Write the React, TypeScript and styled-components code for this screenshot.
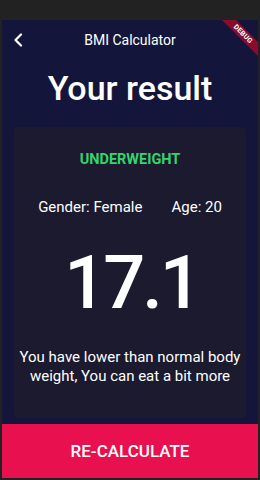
import styled, { createGlobalStyle } from 'styled-components'

const GlobalStyle = createGlobalStyle`
  html, body {
    margin: 0;
    padding: 0;
    background: #222222;
  }
  body {
    font-family: Roboto, "Noto Sans", sans-serif;
  }
`

const Result = {
  status: 'UNDERWEIGHT',
  gender: 'Female',
  age: 20,
  bmi: '17.1',
  advice: 'You have lower than normal body weight, You can eat a bit more',
}

const App = () => {
  return (
    <>
      <GlobalStyle />
      <Frame>
        <StatusBar />
        <Screen>
          <AppBar>
            <BackButton aria-label="back">
              <svg width="10" height="14" viewBox="0 0 10 14">
                <path d="M8 1.5 L2.5 7 L8 12.5" fill="none" stroke="#fff" strokeWidth="2.2" strokeLinecap="round" strokeLinejoin="round" />
              </svg>
            </BackButton>
            <AppTitle>BMI Calculator</AppTitle>
          </AppBar>

          <Heading>Your result</Heading>

          <Card>
            <StatusText>{Result.status}</StatusText>
            <InfoRow>
              <span>Gender: {Result.gender}</span>
              <span>Age: {Result.age}</span>
            </InfoRow>
            <BmiValue>{Result.bmi}</BmiValue>
            <Advice>{Result.advice}</Advice>
          </Card>

          <BottomButton>RE-CALCULATE</BottomButton>

          <DebugRibbon>DEBUG</DebugRibbon>
        </Screen>
      </Frame>
    </>
  )
}

const Frame = styled.div`
  width: 260px;
  height: 480px;
  display: flex;
  flex-direction: column;
  background: #222222;
  padding: 0 2px 2px 2px;
  box-sizing: border-box;
  overflow: hidden;
`

const StatusBar = styled.div`
  height: 20px;
  flex-shrink: 0;
`

const Screen = styled.div`
  position: relative;
  flex: 1;
  display: flex;
  flex-direction: column;
  background: #13163a;
  overflow: hidden;
`

const AppBar = styled.div`
  position: relative;
  height: 40px;
  display: flex;
  align-items: center;
  justify-content: center;
  flex-shrink: 0;
`

const BackButton = styled.div`
  position: absolute;
  left: 11px;
  top: 13px;
  width: 10px;
  height: 14px;
  display: flex;
`

const AppTitle = styled.div`
  color: #ffffff;
  font-size: 14px;
  line-height: 16px;
`

const Heading = styled.div`
  color: #ffffff;
  font-size: 34px;
  font-weight: 500;
  line-height: 40px;
  text-align: center;
  padding: 8px 0 19px;
  flex-shrink: 0;
`

const Card = styled.div`
  margin: 0 12px;
  flex: 1;
  background: #1b1a2f;
  border-radius: 4px;
  display: flex;
  flex-direction: column;
  align-items: center;
  padding-top: 25px;
`

const StatusText = styled.div`
  color: #33d66c;
  font-size: 14.5px;
  font-weight: 700;
  line-height: 16px;
`

const InfoRow = styled.div`
  margin-top: 30px;
  display: flex;
  gap: 29px;
  color: #ffffff;
  font-size: 15px;
  line-height: 18px;
`

const BmiValue = styled.div`
  margin-top: 22px;
  color: #ffffff;
  font-size: 74px;
  font-weight: 500;
  line-height: 90px;
  letter-spacing: -3px;
  padding-left: 3px;
`

const Advice = styled.div`
  margin-top: 20px;
  padding: 0;
  color: #ffffff;
  font-size: 15px;
  line-height: 19px;
  text-align: center;
`

const BottomButton = styled.div`
  margin-top: 6px;
  height: 54px;
  flex-shrink: 0;
  background: #e8104f;
  color: #ffffff;
  font-size: 17px;
  font-weight: 500;
  display: flex;
  align-items: center;
  justify-content: center;
`

const DebugRibbon = styled.div`
  position: absolute;
  top: 9px;
  right: -19px;
  width: 68px;
  height: 10px;
  background: #8a0c2c;
  color: #ffffff;
  font-size: 7px;
  font-weight: 700;
  line-height: 10px;
  text-align: center;
  transform: rotate(45deg);
  letter-spacing: 0.2px;
`

export default App
